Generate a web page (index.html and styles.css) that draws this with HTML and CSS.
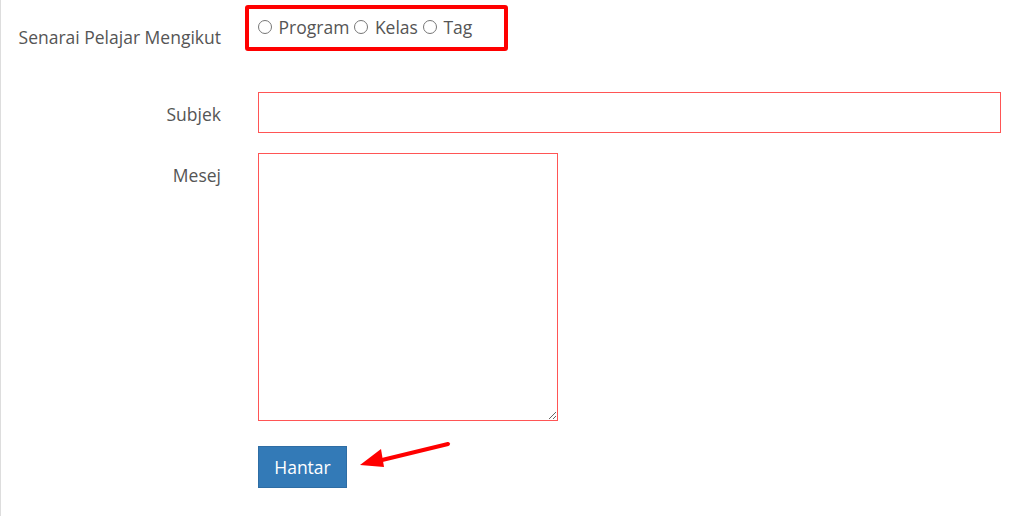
FILE: index.html
```html
<!DOCTYPE html>
<html lang="en">
<head>
  <meta charset="UTF-8" />
  <meta name="viewport" content="width=device-width, initial-scale=1.0"/>
  <title>Hantar Mesej</title>
  <link rel="stylesheet" href="styles.css">
</head>
<body>
  <div class="page">
    <form class="msg-form">
      <div class="form-row row-target">
        <label class="row-label">Senarai Pelajar Mengikut</label>
        <div class="row-field">
          <div class="highlight-box"><label class="radio-opt"><input type="radio" name="target" value="program"> Program</label><label class="radio-opt"><input type="radio" name="target" value="kelas"> Kelas</label><label class="radio-opt"><input type="radio" name="target" value="tag"> Tag</label></div>
        </div>
      </div>

      <div class="form-row row-subject">
        <label class="row-label" for="subjek">Subjek</label>
        <div class="row-field">
          <input type="text" id="subjek" class="text-input">
        </div>
      </div>

      <div class="form-row row-message">
        <label class="row-label" for="mesej">Mesej</label>
        <div class="row-field">
          <textarea id="mesej" class="text-area"></textarea>
        </div>
      </div>

      <div class="form-row row-submit">
        <div class="row-label"></div>
        <div class="row-field">
          <button type="button" class="btn-send">Hantar</button>
        </div>
      </div>
    </form>

    <!-- annotation arrow -->
    <svg class="pointer-arrow" width="100" height="40" viewBox="0 0 100 40">
      <line x1="90" y1="4" x2="20" y2="21" stroke="#f00" stroke-width="4" stroke-linecap="round"/>
      <polygon points="2,25 23,9 26,27" fill="#f00"/>
    </svg>
  </div>
</body>
</html>
```

FILE: styles.css
```css
* {
  box-sizing: border-box;
}

body {
  margin: 0;
  font-family: "Open Sans", Arial, sans-serif;
  font-size: 17.5px;
  color: #555;
  background: #fff;
}

.page {
  position: relative;
  height: 516px;
  border-left: 1px solid #ddd;
}

.form-row {
  display: flex;
  align-items: flex-start;
}

.row-label {
  width: 220px;
  flex-shrink: 0;
  text-align: right;
  line-height: 24px;
  padding-top: 10px;
  white-space: nowrap;
}

.row-field {
  margin-left: 37px;
  flex: 1;
}

.row-target {
  height: 92px;
}

.row-target .row-label {
  padding-top: 25px;
}

.highlight-box {
  display: inline-block;
  margin-top: 5px;
  margin-left: -13px;
  width: 263px;
  height: 46px;
  padding: 6px 0 0 7px;
  border: 4px solid #f00;
  border-radius: 3px;
  line-height: 24px;
}

.radio-opt input {
  width: 14px;
  height: 14px;
  margin: 3px 2px 0 2px;
}

.radio-opt + .radio-opt input {
  margin-left: 5px;
}

.text-input {
  display: block;
  width: 743px;
  height: 41px;
  border: 1px solid #f55;
  outline: none;
  padding: 6px 12px;
  font: inherit;
}

.row-message {
  margin-top: 20px;
}

.text-area {
  display: block;
  width: 300px;
  height: 268px;
  border: 1px solid #f55;
  outline: none;
  padding: 6px 12px;
  font: inherit;
}

.row-submit {
  margin-top: 25px;
}

.btn-send {
  width: 89px;
  height: 42px;
  background: #337ab7;
  border: 1px solid #2e6da4;
  color: #fff;
  font-family: "Open Sans", Arial, sans-serif;
  font-size: 17.5px;
  cursor: pointer;
}

.pointer-arrow {
  position: absolute;
  left: 357px;
  top: 440px;
}
```
